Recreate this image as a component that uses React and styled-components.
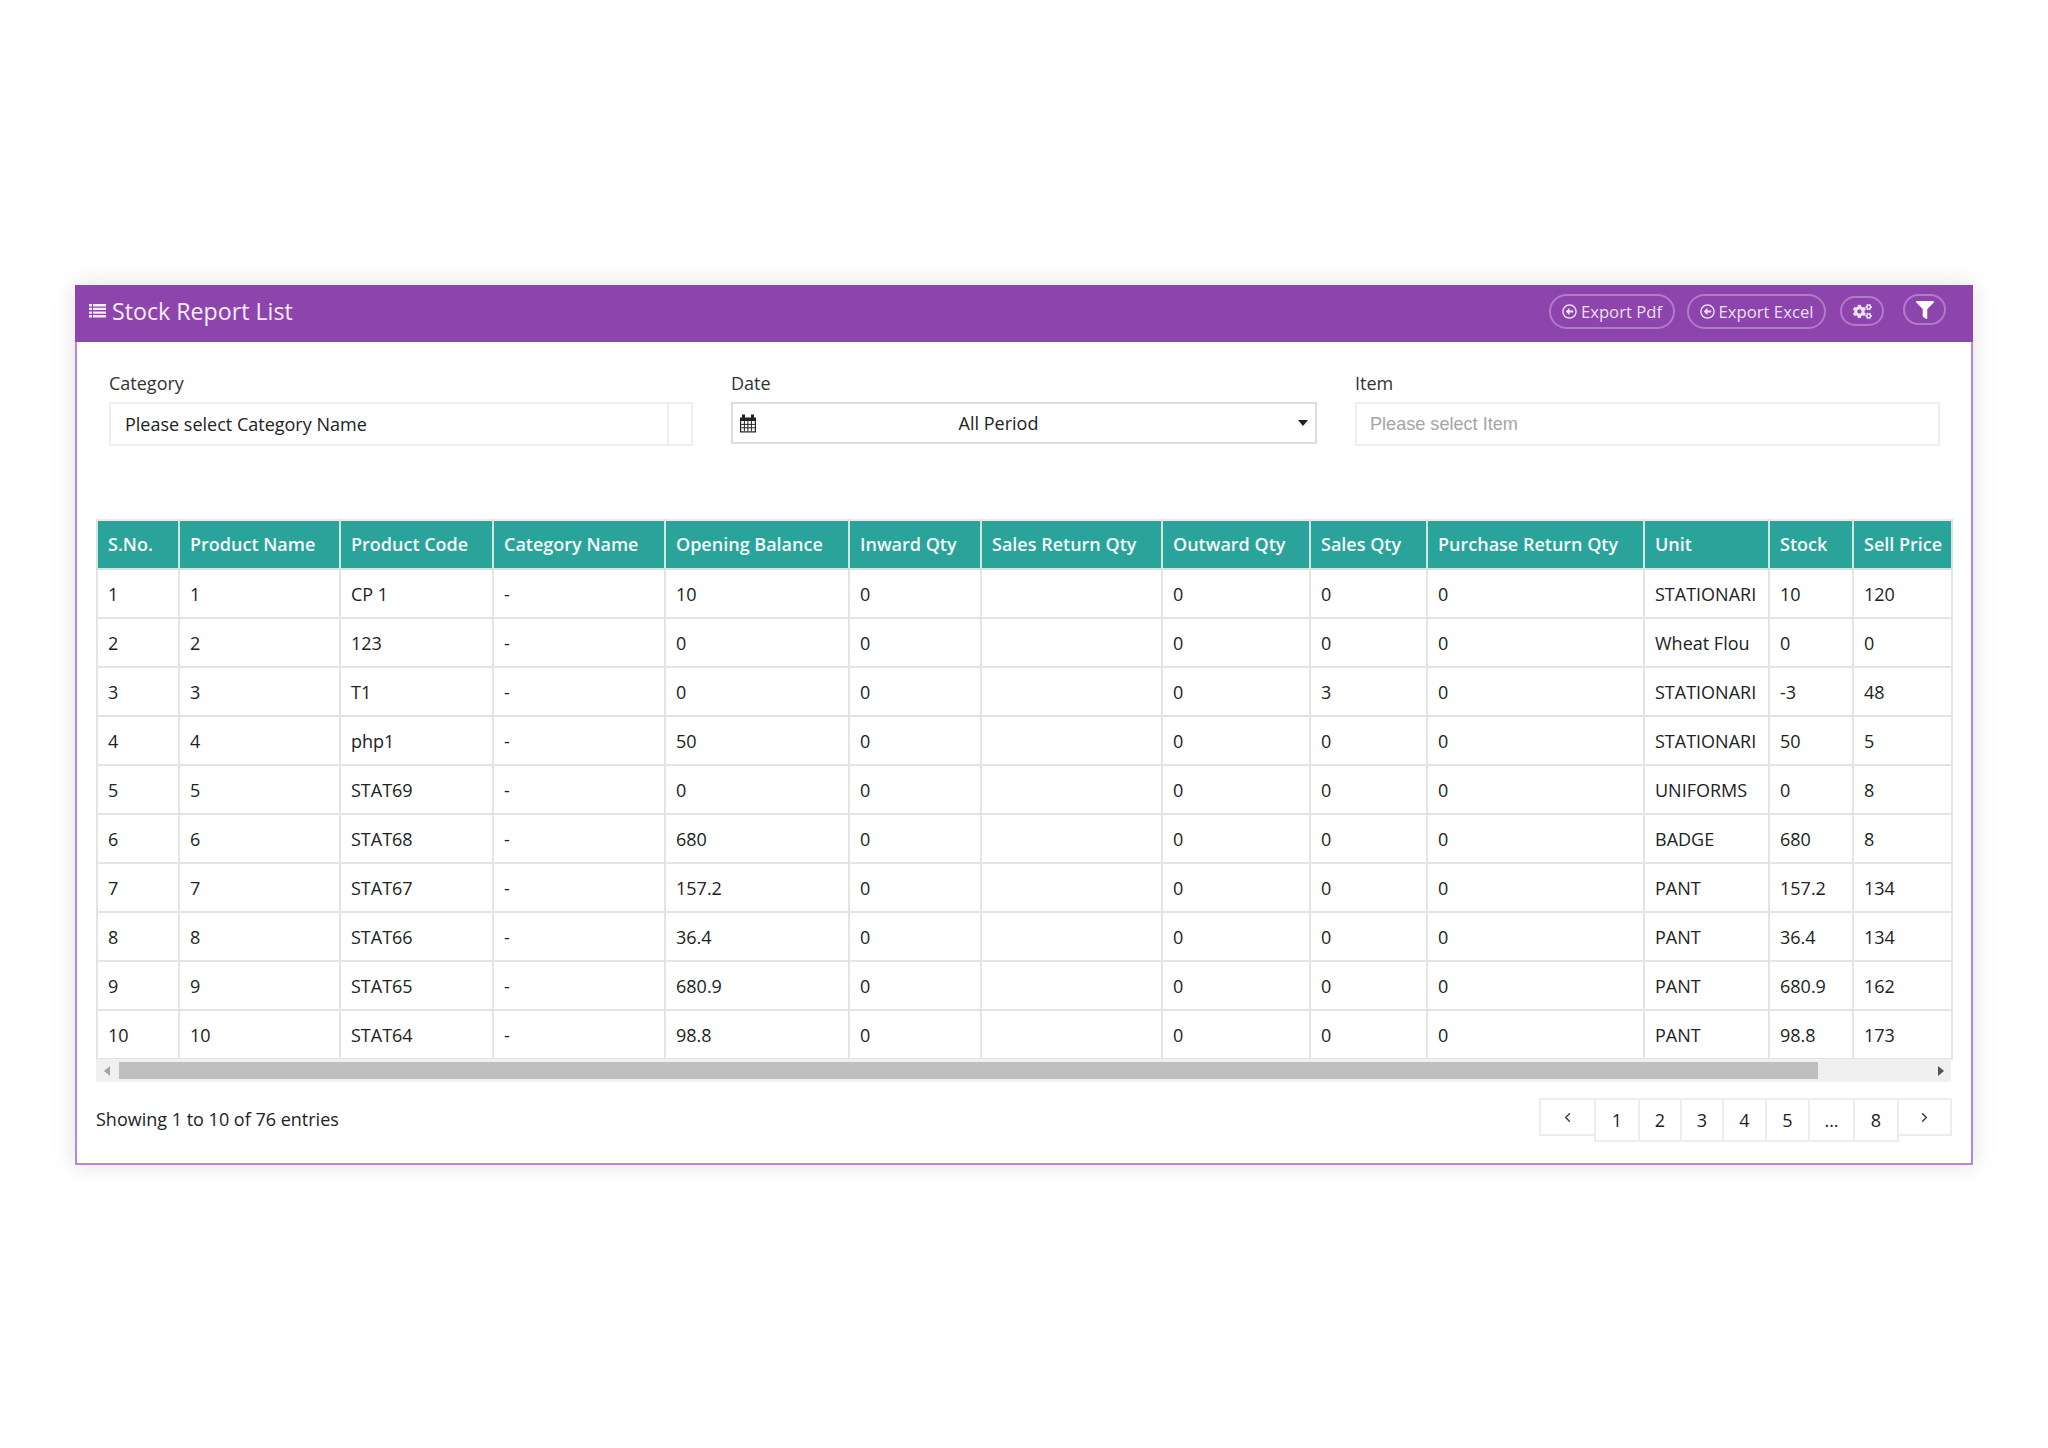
import React from "react";
import styled, { createGlobalStyle } from "styled-components";
import { ChevronLeft, ChevronRight } from "lucide-react";
import { FaCogs, FaFilter, FaRegArrowAltCircleLeft } from "react-icons/fa";

const Global = createGlobalStyle`
  html, body { margin: 0; padding: 0; background: #fff; }
  body { font-family: "Open Sans", "Liberation Sans", sans-serif; color: #222; }
`;

const Page = styled.div`
  box-sizing: border-box;
  width: 2048px;
  height: 1448px;
  padding: 285px 75px 0;
`;

const Panel = styled.section`
  box-sizing: border-box;
  width: 1898px;
  height: 880px;
  background: #fff;
  border: 2px solid #b987d6;
  border-top: 0;
  box-shadow: 0 0 22px rgba(0, 0, 0, 0.13);
`;

const Header = styled.header`
  box-sizing: border-box;
  display: flex;
  justify-content: space-between;
  height: 57px;
  margin: 0 -2px;
  padding: 9px 27px 0 14px;
  background: #8e44ad;
  color: #fff;
`;

const Title = styled.h1`
  display: flex;
  align-items: center;
  gap: 6px;
  height: 34px;
  margin: 0;
  font-size: 23.2px;
  font-weight: 400;
  color: #f6eefa;
`;

const Actions = styled.div`
  display: flex;
  align-items: flex-start;
`;

const PillButton = styled.button`
  box-sizing: border-box;
  display: flex;
  align-items: center;
  justify-content: center;
  gap: 4px;
  width: ${(p) => p.$w}px;
  height: ${(p) => p.$h || 35}px;
  margin-left: ${(p) => p.$gap}px;
  margin-top: ${(p) => p.$top || 0}px;
  padding: 0;
  border: 2px solid rgba(255, 255, 255, 0.3);
  border-radius: 18px;
  background: transparent;
  color: rgba(255, 255, 255, 0.85);
  font: 400 16.7px "Open Sans", sans-serif;
`;

const Filters = styled.div`
  display: grid;
  grid-template-columns: 584px 586px 585px;
  column-gap: 38px;
  padding: 29px 0 0 32px;
`;

const Field = styled.div`
  display: flex;
  flex-direction: column;
`;

const Label = styled.label`
  height: 24px;
  margin-bottom: 7px;
  font-size: 18px;
  line-height: 24px;
  color: #333;
`;

const SelectBox = styled.div`
  box-sizing: border-box;
  display: flex;
  align-items: center;
  height: 44px;
  border: 2px solid #eeeeee;
  font-size: 18px;
  color: #222;
`;

const SelectText = styled.span`
  flex: 1;
  padding-left: 14px;
`;

const SelectAddon = styled.span`
  width: 22px;
  height: 100%;
  border-left: 2px solid #eeeeee;
`;

const Placeholder = styled.span`
  padding: 1px 0 0 13px;
  font-family: "Liberation Sans", Arial, sans-serif;
  font-size: 18.1px;
  color: #a5a5a5;
`;

const DateBox = styled.div`
  box-sizing: border-box;
  display: flex;
  align-items: center;
  height: 42px;
  padding: 0 7px 0 6px;
  border: 2px solid #dcdcdc;
  font-size: 18px;
  color: #222;
`;

const DateText = styled.span`
  flex: 1;
  padding-right: 58px;
  text-align: center;
`;

const Caret = styled.i`
  width: 0;
  height: 0;
  border: 5px solid transparent;
  border-top: 6px solid #222;
  border-bottom: 0;
`;

const TableArea = styled.div`
  margin: 73px 19px 0;
`;

const Table = styled.table`
  width: 1855px;
  table-layout: fixed;
  border-collapse: collapse;
`;

const Th = styled.th`
  box-sizing: border-box;
  height: 49px;
  padding: 0 0 2px 10px;
  background: #2aa39b;
  border: 2px solid #cfe6e3;
  border-top-color: #e2eeee;
  color: #f4fbfa;
  font-size: 18px;
  font-weight: 600;
  text-align: left;
  white-space: nowrap;
  overflow: hidden;
`;

const Td = styled.td`
  box-sizing: border-box;
  height: 49px;
  padding: 0 0 0 10px;
  border: 2px solid #e4e4e4;
  font-size: 18px;
  color: #222;
  white-space: nowrap;
  overflow: hidden;
`;

const Track = styled.div`
  display: flex;
  align-items: center;
  height: 23px;
  width: 1855px;
  margin-top: -1px;
  background: #f0f0f1;
`;

const TrackArrow = styled.i`
  flex: none;
  width: 0;
  height: 0;
  border-style: solid;
  border-color: transparent;
  border-width: 5px 6px;
  ${(p) =>
    p.$dir === "left"
      ? "border-left: 0; border-right-color: #a3a3a3; margin: 0 9px 0 8px;"
      : "border-right: 0; border-left-color: #555; margin: 0 7px 0 auto;"}
`;

const Thumb = styled.div`
  flex: none;
  width: 1699px;
  height: 17px;
  background: #bfbfbf;
`;

const Footer = styled.div`
  display: flex;
  justify-content: space-between;
  align-items: flex-start;
  margin: 16px 19px 0;
`;

const Info = styled.div`
  margin-top: 8px;
  font-size: 18px;
  line-height: 26px;
  color: #222;
`;

const Pager = styled.nav`
  display: flex;
  align-items: flex-start;
`;

const PagerEnd = styled.span`
  box-sizing: border-box;
  display: flex;
  align-items: center;
  justify-content: center;
  width: ${(p) => p.$w}px;
  height: 38px;
  margin-left: ${(p) => p.$ml || 0}px;
  padding-bottom: 0;
  border: 2px solid #ececec;
  color: #333;
`;

const PageNo = styled.span`
  box-sizing: border-box;
  display: flex;
  align-items: center;
  justify-content: center;
  width: ${(p) => p.$w}px;
  height: 44px;
  margin-left: -2px;
  border: 2px solid #ececec;
  background: #fff;
  position: relative;
  font-size: 18px;
  color: #222;
`;

const IconSvg = styled.svg`
  flex: none;
  display: block;
`;

function ListIcon() {
  return (
    <IconSvg width="17" height="14" viewBox="0 0 17 14" fill="currentColor" aria-hidden="true">
      <path d="M0 0h3v2.4H0zM4 0h13v2.4H4zM0 3.7h3v2.4H0zM4 3.7h13v2.4H4zM0 7.4h3v2.4H0zM4 7.4h13v2.4H4zM0 11.1h3v2.4H0zM4 11.1h13v2.4H4z" />
    </IconSvg>
  );
}

function Calendar() {
  return (
    <IconSvg width="18" height="19" viewBox="0 0 18 19" aria-hidden="true">
      <path d="M1 3.5h16v15H1z M3 0.5h3v5H3z M12 0.5h3v5H12z" fill="#222" />
      <path d="M2.2 7h13.6v10.3H2.2z" fill="#fff" />
      <path
        d="M5.4 7v10.3M8.9 7v10.3M12.4 7v10.3M2.2 10.4h13.6M2.2 13.8h13.6"
        stroke="#222"
        strokeWidth="1"
        fill="none"
      />
    </IconSvg>
  );
}

const COLS = [82, 161, 153, 172, 184, 132, 181, 148, 117, 217, 125, 84, 99];
const HEAD = [
  "S.No.", "Product Name", "Product Code", "Category Name", "Opening Balance", "Inward Qty",
  "Sales Return Qty", "Outward Qty", "Sales Qty", "Purchase Return Qty", "Unit", "Stock", "Sell Price",
];
const ROWS = [
  ["1", "1", "CP 1", "-", "10", "0", "", "0", "0", "0", "STATIONARI", "10", "120"],
  ["2", "2", "123", "-", "0", "0", "", "0", "0", "0", "Wheat Flou", "0", "0"],
  ["3", "3", "T1", "-", "0", "0", "", "0", "3", "0", "STATIONARI", "-3", "48"],
  ["4", "4", "php1", "-", "50", "0", "", "0", "0", "0", "STATIONARI", "50", "5"],
  ["5", "5", "STAT69", "-", "0", "0", "", "0", "0", "0", "UNIFORMS", "0", "8"],
  ["6", "6", "STAT68", "-", "680", "0", "", "0", "0", "0", "BADGE", "680", "8"],
  ["7", "7", "STAT67", "-", "157.2", "0", "", "0", "0", "0", "PANT", "157.2", "134"],
  ["8", "8", "STAT66", "-", "36.4", "0", "", "0", "0", "0", "PANT", "36.4", "134"],
  ["9", "9", "STAT65", "-", "680.9", "0", "", "0", "0", "0", "PANT", "680.9", "162"],
  ["10", "10", "STAT64", "-", "98.8", "0", "", "0", "0", "0", "PANT", "98.8", "173"],
];
const PAGES = [["1", 46], ["2", 44], ["3", 44], ["4", 45], ["5", 45], ["...", 47], ["8", 46]];

export default function App() {
  return (
    <Page>
      <Global />
      <Panel>
        <Header>
          <Title>
            <ListIcon />
            Stock Report List
          </Title>
          <Actions>
            <PillButton $w={126} $gap={0}>
              <FaRegArrowAltCircleLeft size={15} />
              Export Pdf
            </PillButton>
            <PillButton $w={139} $gap={12}>
              <FaRegArrowAltCircleLeft size={15} />
              Export Excel
            </PillButton>
            <PillButton $w={44} $h={30} $gap={14} $top={2}>
              <FaCogs size={19} />
            </PillButton>
            <PillButton $w={43} $h={31} $gap={19}>
              <FaFilter size={18} color="#fff" />
            </PillButton>
          </Actions>
        </Header>

        <Filters>
          <Field>
            <Label>Category</Label>
            <SelectBox>
              <SelectText>Please select Category Name</SelectText>
              <SelectAddon />
            </SelectBox>
          </Field>
          <Field>
            <Label>Date</Label>
            <DateBox>
              <Calendar />
              <DateText>All Period</DateText>
              <Caret />
            </DateBox>
          </Field>
          <Field>
            <Label>Item</Label>
            <SelectBox>
              <Placeholder>Please select Item</Placeholder>
            </SelectBox>
          </Field>
        </Filters>

        <TableArea>
          <Table>
            <colgroup>
              {COLS.map((w, i) => (
                <col key={i} style={{ width: w }} />
              ))}
            </colgroup>
            <thead>
              <tr>
                {HEAD.map((h) => (
                  <Th key={h}>{h}</Th>
                ))}
              </tr>
            </thead>
            <tbody>
              {ROWS.map((r) => (
                <tr key={r[0]}>
                  {r.map((c, i) => (
                    <Td key={i}>{c}</Td>
                  ))}
                </tr>
              ))}
            </tbody>
          </Table>
          <Track>
            <TrackArrow $dir="left" />
            <Thumb />
            <TrackArrow $dir="right" />
          </Track>
        </TableArea>

        <Footer>
          <Info>Showing 1 to 10 of 76 entries</Info>
          <Pager>
            <PagerEnd $w={57}>
              <ChevronLeft size={15} strokeWidth={2} />
            </PagerEnd>
            {PAGES.map(([p, w]) => (
              <PageNo key={p} $w={w}>
                {p}
              </PageNo>
            ))}
            <PagerEnd $w={55} $ml={-2}>
              <ChevronRight size={15} strokeWidth={2} />
            </PagerEnd>
          </Pager>
        </Footer>
      </Panel>
    </Page>
  );
}
